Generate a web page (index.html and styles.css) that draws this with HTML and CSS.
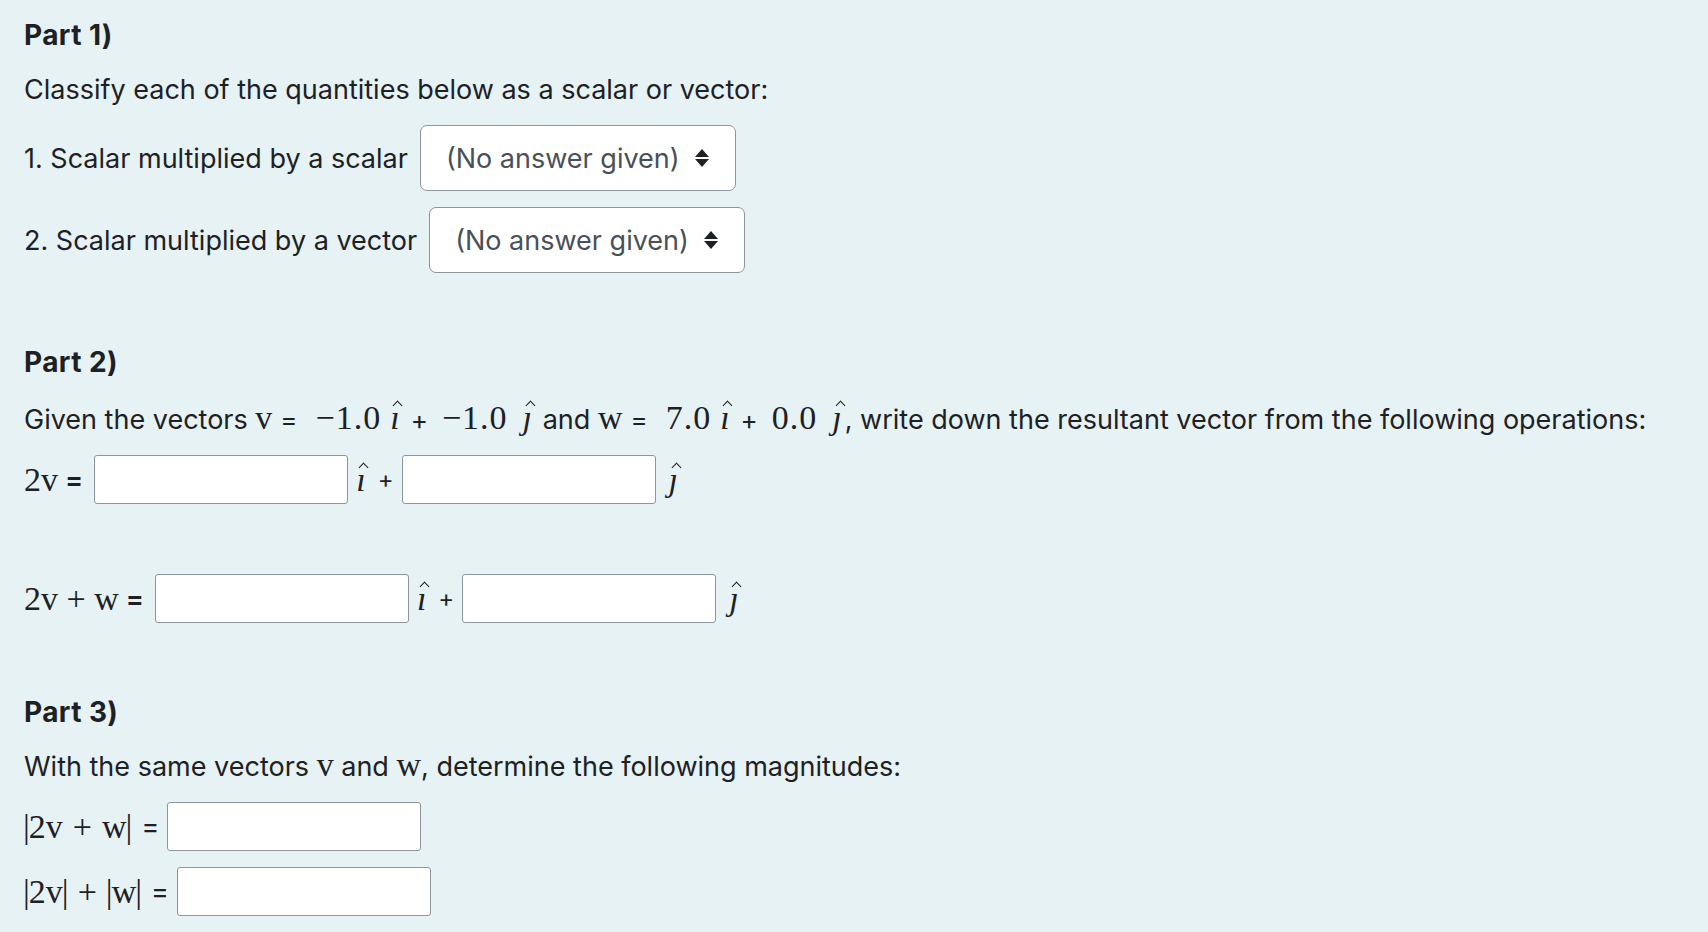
FILE: index.html
```html
<!DOCTYPE html>
<html lang="en">
<head>
    <meta charset="UTF-8">
    <title>Vectors question</title>
    <link rel="stylesheet" href="styles.css">
</head>
<body>
    <div class="formulation">
        <h4 class="part-title">Part 1)</h4>
        <p class="intro">Classify each of the quantities below as a scalar or vector:</p>
        <div class="answer-row">
            <span>1. Scalar multiplied by a scalar</span>
            <span class="select">(No answer given)<span class="arrows"></span></span>
        </div>
        <div class="answer-row">
            <span>2. Scalar multiplied by a vector</span>
            <span class="select">(No answer given)<span class="arrows"></span></span>
        </div>

        <h4 class="part-title part-gap">Part 2)</h4>
        <p class="intro math-line">Given the vectors <span class="math">v</span><span class="op eq-op">=</span><span class="math num">&minus;1.0<span class="vec">ı</span></span><span class="op">+</span><span class="math num">&minus;1.0<span class="vec vec-j">ȷ</span></span> and <span class="math">w</span><span class="op eq-op">=</span><span class="math num">7.0<span class="vec">ı</span></span><span class="op">+</span><span class="math num">0.0<span class="vec vec-j">ȷ</span></span>, write down the resultant vector from the following operations:</p>
        <div class="answer-row tight">
            <span class="math">2v</span><span class="eq">=</span>
            <input class="box" type="text">
            <span class="math unit"><span class="vec">ı</span></span><span class="plus">+</span>
            <input class="box" type="text">
            <span class="math unit"><span class="vec vec-j">ȷ</span></span>
        </div>
        <div class="answer-row tight row-gap">
            <span class="math">2v + w</span><span class="eq">=</span>
            <input class="box" type="text">
            <span class="math unit"><span class="vec">ı</span></span><span class="plus">+</span>
            <input class="box" type="text">
            <span class="math unit"><span class="vec vec-j">ȷ</span></span>
        </div>

        <h4 class="part-title part-gap">Part 3)</h4>
        <p class="intro">With the same vectors <span class="math">v</span> and <span class="math">w</span>, determine the following magnitudes:</p>
        <div class="answer-row tight">
            <span class="math"><span class="bar">|</span>2v<span class="mop">+</span>w<span class="bar">|</span></span><span class="eq thin">=</span>
            <input class="box" type="text">
        </div>
        <div class="answer-row tight">
            <span class="math"><span class="bar">|</span>2v<span class="bar">|</span><span class="mop">+</span><span class="bar">|</span>w<span class="bar">|</span></span><span class="eq thin">=</span>
            <input class="box" type="text">
        </div>
    </div>
</body>
</html>
```

FILE: styles.css
```css
html, body {
    margin: 0;
    background-color: #e7f2f4;
}
body {
    font-family: Inter, "Noto Sans", sans-serif;
    font-size: 27px;
    line-height: 39px;
    color: #1d2125;
}
.formulation {
    padding: 16px 24px 20px;
}
.part-title {
    margin: 0 0 15px;
    font-size: 28px;
    font-weight: 700;
    letter-spacing: 0.4px;
}
.part-gap {
    margin-top: 70px;
}
.intro {
    margin: 0 0 16px;
}
.math-line {
    padding-top: 3px;
}
.answer-row {
    display: flex;
    align-items: center;
    gap: 12px;
    margin-bottom: 16px;
}
.answer-row.tight {
    gap: 0;
}
.row-gap {
    margin-top: 70px;
}
.select {
    display: flex;
    align-items: center;
    justify-content: space-between;
    box-sizing: border-box;
    width: 316px;
    height: 66px;
    padding: 0 26px 0 25px;
    background: #fff;
    border: 1.5px solid #8f959e;
    border-radius: 7px;
    color: #495057;
}
.arrows {
    position: relative;
    width: 14px;
    height: 20px;
}
.arrows::before,
.arrows::after {
    content: "";
    position: absolute;
    left: 0;
    border-left: 7px solid transparent;
    border-right: 7px solid transparent;
}
.arrows::before {
    top: 1px;
    border-bottom: 8px solid #1d2125;
}
.arrows::after {
    bottom: 1px;
    border-top: 8px solid #1d2125;
}
.math {
    font-family: "Liberation Serif", "DejaVu Serif", serif;
    font-size: 34px;
    line-height: 1;
}
.math.num {
    letter-spacing: 1px;
}
.op {
    margin: 0 14px 0 8px;
    font-size: 26px;
}
.eq-op {
    margin: 0 18px 0 8px;
}
.mop {
    margin: 0 10px;
}
.bar {
    margin: 0 -1px;
}
.vec {
    position: relative;
    display: inline-block;
    margin-left: 9px;
    padding-right: 3px;
    font-style: italic;
    letter-spacing: 0;
}
.vec-j {
    margin-left: 15px;
}
.vec::before {
    content: "";
    position: absolute;
    top: 1px;
    left: calc(50% - 2px);
    box-sizing: border-box;
    width: 7px;
    height: 7px;
    border-top: 1.5px solid #1d2125;
    border-left: 1.5px solid #1d2125;
    transform: rotate(45deg);
}
.eq {
    margin: 0 11px 0 7px;
    font-weight: 600;
}
.eq.thin {
    margin: 0 8px 0 10px;
    font-weight: 400;
}
.box {
    box-sizing: border-box;
    width: 254px;
    height: 49px;
    margin: 0;
    background: #fff;
    border: 1.5px solid #8f959e;
    border-radius: 3px;
    font-size: 22px;
}
.unit .vec {
    margin-left: 8px;
}
.unit .vec-j {
    margin-left: 13px;
}
.unit {
    margin-right: 9px;
}
.plus {
    margin-right: 8px;
    font-size: 24px;
}
```
